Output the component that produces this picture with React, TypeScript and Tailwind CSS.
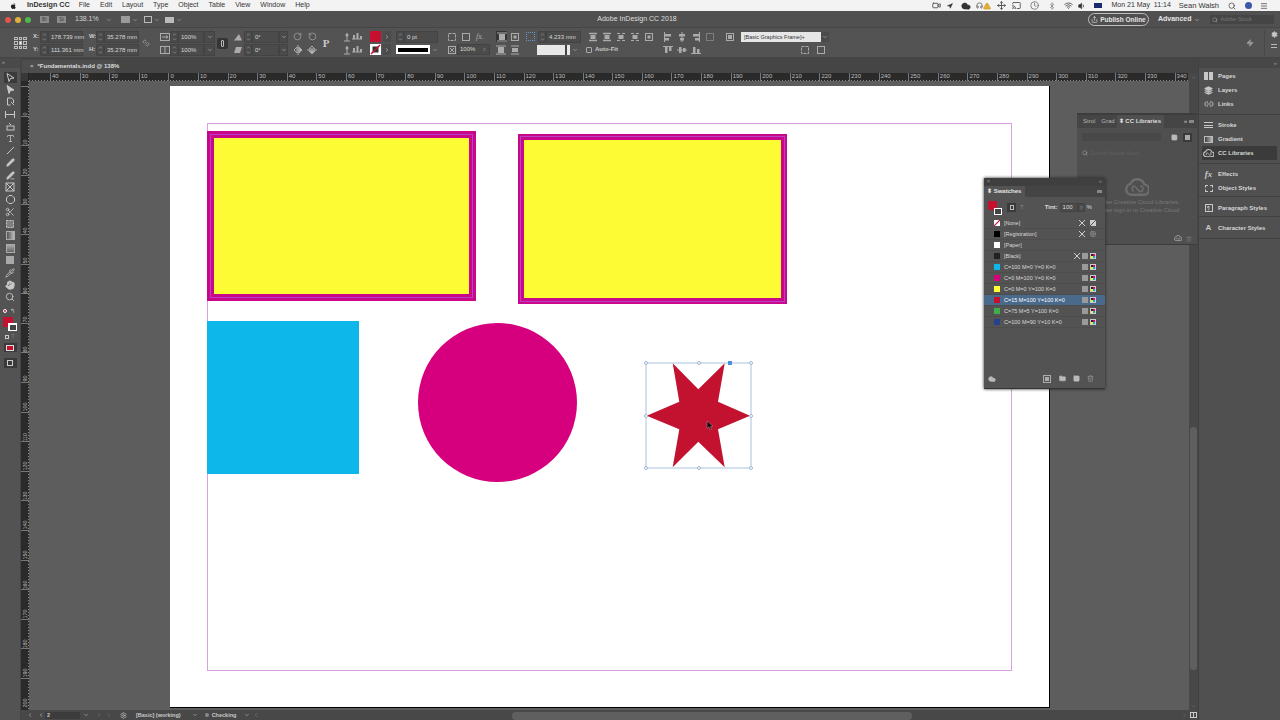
import React from "react";
import {
  ChevronDown, ChevronRight, ChevronUp, Search, Wifi, Volume1, Clock, Cloud, Navigation, Settings, Zap, Share, Layers, Link2, Trash2, Folder, Square, Hand, Pipette, Pencil, PenLine, Scissors, Type as TypeIcon, RotateCw, RotateCcw, AlertTriangle, Grid2x2, Menu, Cast, Video, Headphones, Move, Bluetooth,
} from "lucide-react";

const DIM = "#ababab";

function Stepper() {
  return (
    <div className="w-[8px] h-[12px] bg-[#4b4b4b] border border-[#434343] rounded-[1px] flex flex-col items-center justify-center shrink-0">
      <ChevronUp size={5} strokeWidth={2} className="text-[#c4c4c4]" />
      <ChevronDown size={5} strokeWidth={2} className="text-[#c4c4c4]" />
    </div>
  );
}

function Field({ label, value, w }: { label: string; value: string; w: number }) {
  return (
    <div className="flex items-center h-[12px]">
      <span className="text-[6px] w-[7px] text-[#d0d0d0] font-bold">{label}</span>
      <Stepper />
      <div className="h-[12px] bg-[#4b4b4b] border border-[#434343] text-[6px] leading-[10px] px-[2px] text-[#d8d8d8] whitespace-nowrap" style={{ width: w }}>
        {value}
      </div>
    </div>
  );
}

type GlyphKind = "box" | "frame" | "fit" | "fitV" | "wrap" | "wrap2" | "center" | "alignL" | "alignC" | "alignR" | "dist" | "alT" | "alM" | "alB" | "flipH" | "flipV" | "tree" | "bars" | "scaleW" | "scaleH" | "angle" | "shear" | "xbox" | "ctr" | "fill";

function G({ k }: { k: GlyphKind }) {
  const c = DIM;
  const p: Record<GlyphKind, React.ReactNode> = {
    box: <rect x="1.500" y="1.500" width="7" height="7" />,
    frame: <rect x="1.500" y="1.500" width="7" height="7" strokeDasharray="3 1" />,
    fit: <><rect x="1.500" y="1.500" width="7" height="7" /><rect x="3" y="3" width="4" height="4" fill={c} stroke="none" /></>,
    fitV: <><path d="M1 1.500h8M1 8.500h8" strokeWidth="1.500" /><rect x="2.500" y="3" width="5" height="4" fill={c} stroke="none" /></>,
    wrap: <><rect x="2" y="2" width="6" height="6" fill={c} stroke="none" /><path d="M0 1h10M0 9h10" /></>,
    wrap2: <><rect x="1.500" y="1.500" width="7" height="7" /><rect x="3.500" y="3.500" width="3" height="3" fill={c} stroke="none" /></>,
    center: <><rect x="2" y="3" width="6" height="4" fill={c} stroke="none" /><path d="M1 1h8M1 9h8" /></>,
    alignL: <><path d="M1.500 0v10" /><rect x="2" y="2" width="6" height="2.500" fill={c} stroke="none" /><rect x="2" y="6" width="4" height="2.500" fill={c} stroke="none" /></>,
    alignC: <><path d="M5 0v10" /><rect x="2" y="2" width="6" height="2.500" fill={c} stroke="none" /><rect x="3" y="6" width="4" height="2.500" fill={c} stroke="none" /></>,
    alignR: <><path d="M8.500 0v10" /><rect x="2" y="2" width="6" height="2.500" fill={c} stroke="none" /><rect x="4" y="6" width="4" height="2.500" fill={c} stroke="none" /></>,
    dist: <rect x="1.500" y="1.500" width="7" height="7" strokeDasharray="1 1" />,
    alT: <><path d="M0 1.500h10" /><rect x="2" y="2" width="2.500" height="6" fill={c} stroke="none" /><rect x="6" y="2" width="2.500" height="4" fill={c} stroke="none" /></>,
    alM: <><path d="M0 5h10" /><rect x="2" y="2" width="2.500" height="6" fill={c} stroke="none" /><rect x="6" y="3" width="2.500" height="4" fill={c} stroke="none" /></>,
    alB: <><path d="M0 8.500h10" /><rect x="2" y="2" width="2.500" height="6" fill={c} stroke="none" /><rect x="6" y="4" width="2.500" height="4" fill={c} stroke="none" /></>,
    flipH: <><path d="M5 0v10" /><path d="M4 2v6L1 5z" /><path d="M6 2v6l3-3z" fill={c} /></>,
    flipV: <><path d="M0 5h10" /><path d="M2 4h6L5 1z" /><path d="M2 6h6L5 9z" fill={c} /></>,
    tree: <><path d="M5 1v8M2 9h6" /><circle cx="5" cy="3" r="1.500" fill={c} stroke="none" /></>,
    bars: <><path d="M0 7h10" /><rect x="1" y="3" width="2" height="4" fill={c} stroke="none" /><rect x="4.500" y="1" width="2" height="6" fill={c} stroke="none" /><rect x="8" y="4" width="2" height="3" fill={c} stroke="none" /></>,
    scaleW: <><rect x=".5" y="1.500" width="9" height="7" /><path d="M2 5h6M6 3.500L8 5 6 6.500" /></>,
    scaleH: <><rect x=".5" y="1.500" width="9" height="7" /><path d="M5 8V2" /></>,
    angle: <><path d="M1 8.500h8L6 2z" fill={c} stroke="none" /></>,
    shear: <path d="M3 2h6L7 8H1z" fill={c} stroke="none" />,
    xbox: <><rect x="1.500" y="1.500" width="7" height="7" /><path d="M3 3l4 4M7 3l-4 4" /></>,
    ctr: <><path d="M1 1.500h3M6 1.500h3M1 8.500h3M6 8.500h3" /><rect x="2.500" y="3" width="5" height="4" fill={c} stroke="none" /></>,
    fill: <rect x="2" y="2" width="6" height="6" fill={c} stroke="none" />,
  };
  return (
    <svg width="10" height="10" viewBox="0 0 10 10" className="shrink-0" fill="none" stroke={c} strokeWidth="1">
      {p[k]}
    </svg>
  );
}

function PctField({ k }: { k: GlyphKind }) {
  return (
    <div className="flex items-center h-[12px]">
      <div className="w-[10px] flex justify-start"><G k={k} /></div>
      <Stepper />
      <div className="w-[26px] h-[12px] bg-[#4b4b4b] border border-[#434343] text-[6px] leading-[10px] px-[2px] text-[#d8d8d8]">100%</div>
      <div className="w-[11px] h-[12px] bg-[#4b4b4b] border border-[#434343] flex items-center justify-center">
        <ChevronDown size={6} className="text-[#c4c4c4]" />
      </div>
    </div>
  );
}

function AngleField({ k }: { k: GlyphKind }) {
  return (
    <div className="flex items-center h-[12px]">
      <div className="w-[11px] flex justify-start"><G k={k} /></div>
      <Stepper />
      <div className="w-[27px] h-[12px] bg-[#4b4b4b] border border-[#434343] text-[6px] leading-[10px] px-[2px] text-[#d8d8d8]">0°</div>
      <div className="w-[9px] h-[12px] bg-[#4b4b4b] border border-[#434343] flex items-center justify-center">
        <ChevronDown size={6} className="text-[#c4c4c4]" />
      </div>
    </div>
  );
}

function Col({ children, w, ml = 0 }: { children: React.ReactNode; w: number; ml?: number }) {
  return (
    <div className="flex flex-col gap-[1px] shrink-0" style={{ width: w, marginLeft: ml }}>
      {children}
    </div>
  );
}

function Row({ ks, className = "justify-between" }: { ks: GlyphKind[]; className?: string }) {
  return (
    <div className={`flex items-center h-[12px] ${className}`}>
      {ks.map((k, i) => <G key={i} k={k} />)}
    </div>
  );
}

function ControlPanel() {
  return (
    <div className="h-[30px] bg-[#535353] border-b border-[#454545] flex items-center pt-[1px] pl-[14px] shrink-0 relative">
      <div className="grid grid-cols-3 gap-[1px] w-[13px] shrink-0">
        {Array.from({ length: 9 }).map((_, i) => (
          <div key={i} className={`w-[3.6px] h-[3.6px] border border-[#bdbdbd] ${i === 4 ? "bg-white" : ""}`} />
        ))}
      </div>
      <Col w={50} ml={6}>
        <Field label="X:" value="178.739 mm" w={35} />
        <Field label="Y:" value="111.361 mm" w={35} />
      </Col>
      <Col w={50} ml={6}>
        <Field label="W:" value="35.278 mm" w={35} />
        <Field label="H:" value="35.278 mm" w={35} />
      </Col>
      <div className="w-[9px] ml-[2px] mr-[3px] shrink-0 flex justify-center"><Link2 size={8} className="text-[#a5a5a5] rotate-45" /></div>
      <Col w={55} ml={7}>
        <PctField k="scaleW" />
        <PctField k="scaleH" />
      </Col>
      <div className="w-[11px] h-[11px] ml-[2px] bg-[#353535] rounded-[2px] flex items-center justify-center shrink-0">
        <div className="w-[3px] h-[7px] border border-[#bbb] rounded-[1px]" />
      </div>
      <Col w={55} ml={5}>
        <AngleField k="angle" />
        <AngleField k="shear" />
      </Col>
      <Col w={24} ml={5}>
        <div className="flex items-center justify-between h-[12px]">
          <RotateCw size={9} className="text-[#a0a0a0]" />
          <RotateCcw size={9} className="text-[#a0a0a0]" />
        </div>
        <Row ks={["flipH", "flipV"]} />
      </Col>
      <div className="w-[12px] ml-[3px] shrink-0 text-[11px] leading-none font-['Liberation_Serif',serif] font-bold text-[#c8c8c8] text-center">P</div>
      <Col w={20} ml={10}>
        <Row ks={["tree", "bars"]} />
        <Row ks={["tree", "bars"]} />
      </Col>
      <Col w={22} ml={8}>
        <div className="flex items-center h-[12px]">
          <div className="w-[11px] h-[11px] bg-[#c5102f]" />
          <div className="w-[8px] h-[11px] ml-[2px] bg-[#4b4b4b] flex items-center justify-center"><ChevronRight size={6} className="text-[#ddd]" /></div>
        </div>
        <div className="flex items-center h-[12px]">
          <svg width="11" height="11"><rect width="11" height="11" fill="#fff" /><rect x="2.500" y="2.500" width="6" height="6" fill="#333" /><line x1="1" y1="10" x2="10" y2="1" stroke="#c5102f" strokeWidth="1.400" /></svg>
          <div className="w-[8px] h-[11px] ml-[2px] bg-[#4b4b4b] flex items-center justify-center"><ChevronRight size={6} className="text-[#ddd]" /></div>
        </div>
      </Col>
      <Col w={42} ml={4}>
        <div className="flex items-center h-[12px]">
          <Stepper />
          <div className="w-[34px] h-[12px] bg-[#4b4b4b] border border-[#434343] text-[6px] leading-[10px] px-[2px] text-[#d8d8d8]">0 pt</div>
        </div>
        <div className="flex items-center h-[12px]">
          <div className="w-[34px] h-[9px] bg-white flex items-center justify-center px-[2px]"><div className="w-full h-[4px] bg-black" /></div>
          <ChevronDown size={6} className="text-[#c4c4c4] ml-[2px]" />
        </div>
      </Col>
      <Col w={43} ml={9}>
        <div className="flex items-center h-[12px] gap-[4px]">
          <G k="frame" /><G k="box" />
          <span className="ml-[1px] font-['Liberation_Serif',serif] italic text-[8px] leading-none text-[#ababab]">fx.</span>
        </div>
        <div className="flex items-center h-[12px]">
          <G k="xbox" />
          <div className="w-[33px] h-[11px] bg-[#4b4b4b] border border-[#434343] text-[6px] leading-[9px] px-[2px] text-[#d8d8d8] flex justify-between items-center"><span>100%</span><ChevronRight size={5} /></div>
        </div>
      </Col>
      <Col w={24} ml={6}>
        <div className="flex items-center justify-between h-[12px]">
          <div className="w-[11px] h-[11px] bg-[#353535] flex items-center justify-center"><G k="wrap" /></div>
          <G k="wrap2" />
        </div>
        <Row ks={["wrap", "center"]} />
      </Col>
      <Col w={56} ml={6}>
        <div className="flex items-center h-[12px]">
          <div className="w-[9px] h-[9px] mr-[3px] border border-dotted border-[#5b9bd5] shrink-0" />
          <Stepper />
          <div className="w-[35px] h-[12px] bg-[#4b4b4b] border border-[#434343] text-[6px] leading-[10px] px-[2px] text-[#d8d8d8]">4.233 mm</div>
        </div>
        <div className="flex items-center h-[12px] pl-[11px]">
          <div className="w-[33px] h-[10px] bg-[#e8e8e8] flex justify-end pr-[3px] shrink-0"><div className="w-[2px] h-full bg-[#444]" /></div>
          <ChevronDown size={6} className="text-[#c4c4c4] ml-[2px]" />
        </div>
      </Col>
      <Col w={68} ml={4}>
        <div className="flex items-center justify-between h-[12px] pl-[2px]"><G k="fitV" /><G k="fitV" /><G k="ctr" /><G k="ctr" /><G k="wrap2" /></div>
        <div className="flex items-center h-[12px] gap-[3px]">
          <div className="w-[6px] h-[6px] border border-[#aaa] rounded-[1px]" />
          <span className="text-[6px] text-[#c8c8c8] font-bold">Auto-Fit</span>
        </div>
      </Col>
      <Col w={52} ml={9}>
        <Row ks={["alignL", "alignC", "alignR", "dist"]} />
        <div className="flex items-center gap-[4px] h-[12px]"><G k="alT" /><G k="alM" /><G k="alB" /></div>
      </Col>
      <div className="flex flex-col ml-[10px] gap-[1px] w-[104px] shrink-0">
        <div className="flex items-center h-[12px]">
          <G k="fit" />
          <div className="w-[81px] h-[10px] ml-[6px] bg-[#e6e6e6] text-[5.5px] leading-[10px] px-[3px] text-[#333] whitespace-nowrap">[Basic Graphics Frame]+</div>
          <div className="w-[8px] h-[10px] bg-[#4b4b4b] flex items-center justify-center"><ChevronDown size={6} className="text-[#c4c4c4]" /></div>
        </div>
        <div className="flex items-center justify-end h-[12px] gap-[6px] pr-[3px]"><G k="frame" /><G k="box" /></div>
      </div>
      <div className="ml-auto flex items-center">
        <Zap size={8} className="text-[#9a9a9a] mr-[10px]" fill="#9a9a9a" />
        <div className="flex flex-col items-center gap-[6px] border-l border-[#484848] pl-[3px] w-[16px] h-[26px] py-[1px]">
          <Settings size={7} className="text-[#c8c8c8]" fill="#c8c8c8" />
          <div className="w-[6px] h-[4px] border-y border-[#bbb]" />
        </div>
      </div>
    </div>
  );
}

function MenuBar() {
  const items = ["File", "Edit", "Layout", "Type", "Object", "Table", "View", "Window", "Help"];
  const cls = "text-[#333] shrink-0";
  return (
    <div className="h-[11px] bg-[#f3f3f3] flex items-center text-[7px] text-[#333] shrink-0 pl-[10px] font-['Liberation_Sans',sans-serif]">
      <svg width="7" height="8" viewBox="0 0 24 24" fill="#222" className="mr-[10px] shrink-0">
        <path d="M17 12.500c0-2.600 2.100-3.800 2.200-3.900-1.200-1.800-3.100-2-3.700-2-1.600-.2-3.100.9-3.900.9-.8 0-2-.9-3.300-.9-1.700 0-3.300 1-4.200 2.500-1.800 3.100-.5 7.700 1.300 10.200.9 1.200 1.900 2.600 3.200 2.600 1.300-.1 1.800-.8 3.300-.8 1.600 0 2 .8 3.300.8 1.400 0 2.300-1.200 3.100-2.500 1-1.400 1.400-2.800 1.400-2.900-.1 0-2.700-1-2.700-4zM14.500 4.900c.7-.9 1.200-2 1.100-3.200-1 0-2.300.7-3 1.500-.6.700-1.200 1.900-1.100 3.100 1.200.1 2.300-.6 3-1.400z" />
      </svg>
      <span className="font-bold text-[7.2px] mr-[9px]">InDesign CC</span>
      <div className="flex gap-[10px]">
        {items.map((m) => <span key={m}>{m}</span>)}
      </div>
      <div className="ml-auto flex items-center pr-[12px]">
        <Video size={9} className={`${cls} mr-[6px]`} />
        <Navigation size={6} fill="#333" className={`${cls} mr-[8px]`} />
        <Cloud size={10} fill="#333" className={`${cls} mr-[5px]`} />
        <Headphones size={7} className={cls} />
        <AlertTriangle size={8} fill="#e9b23a" className="text-[#c8941e] mr-[6px] shrink-0" />
        <Move size={9} className={`${cls} mr-[6px]`} />
        <Cast size={9} className={`${cls} mr-[9px]`} />
        <Clock size={9} className="mr-[9px] text-[#666] shrink-0" />
        <Bluetooth size={8} className="mr-[8px] text-[#777] shrink-0" />
        <Wifi size={9} className={`${cls} mr-[5px]`} />
        <Volume1 size={8} fill="#333" className={`${cls} mr-[8px]`} />
        <div className="w-[8px] h-[5px] bg-[#1a2a6c] mr-[9px] shrink-0" />
        <span className="mr-[8px] whitespace-nowrap">Mon 21 May&nbsp; 11:14</span>
        <span className="mr-[9px] whitespace-nowrap text-[7.5px]">Sean Walsh</span>
        <Search size={8} className={`${cls} mr-[9px]`} />
        <div className="w-[7px] h-[7px] rounded-full bg-[#3a57a8] mr-[8px] shrink-0" />
        <Menu size={8} className={cls} />
      </div>
    </div>
  );
}

function AppBar() {
  return (
    <div className="h-[17px] bg-[#505050] border-b border-[#464646] flex items-center pt-[1px] text-[7px] shrink-0">
      <div className="w-[190px] flex items-center pl-[5px] shrink-0">
        <div className="w-[6px] h-[6px] rounded-full bg-[#e2544d]" />
        <div className="w-[6px] h-[6px] rounded-full bg-[#e0b13a] ml-[4px]" />
        <div className="w-[6px] h-[6px] rounded-full bg-[#4fb84a] ml-[4px]" />
        <div className="w-[9px] h-[7px] ml-[9px] bg-[#8a8a8a] text-[5px] leading-[7px] text-center text-[#444]">Br</div>
        <div className="w-[9px] h-[7px] ml-[8px] bg-[#8a8a8a] text-[5px] leading-[7px] text-center text-[#444]">St</div>
        <span className="ml-[9px] text-[#d0d0d0]">138.1%</span>
        <ChevronDown size={6} className="ml-[7px] text-[#bbb]" />
        <div className="w-[9px] h-[7px] ml-[9px] bg-[#9a9a9a]" />
        <ChevronDown size={6} className="ml-[2px] text-[#bbb]" />
        <div className="w-[8px] h-[7px] ml-[6px] border border-[#bbb]" />
        <ChevronDown size={6} className="ml-[2px] text-[#bbb]" />
        <div className="w-[9px] h-[6px] ml-[5px] bg-[#bbb]" />
        <ChevronDown size={6} className="ml-[2px] text-[#bbb]" />
      </div>
      <div className="flex-1 text-center text-[#dedede] text-[7px]">Adobe InDesign CC 2018</div>
      <div className="w-[196px] flex items-center pl-[4px] shrink-0">
        <div className="w-[61px] h-[13px] rounded-full border border-[#bdbdbd] flex items-center justify-center gap-[2px] text-[#e6e6e6] font-bold text-[6.5px] whitespace-nowrap">
          <Share size={7} /><span>Publish Online</span>
        </div>
        <span className="ml-[9px] text-[#e6e6e6] font-bold">Advanced</span>
        <ChevronDown size={6} className="ml-[3px] text-[#ccc]" />
        <div className="w-[64px] h-[9px] ml-[10px] bg-[#454545] flex items-center pl-[2px] gap-[2px] text-[5.5px] text-[#777]">
          <Search size={6} className="text-[#aaa]" /><span>Adobe Stock</span>
        </div>
      </div>
    </div>
  );
}

function Toolbar() {
  const simple = (c: React.ReactNode, k: string, active = false) => (
    <div key={k} className={`w-[13px] h-[11px] flex items-center justify-center ${active ? "bg-[#3a3a3a]" : ""}`}>{c}</div>
  );
  const ic = "text-[#c8c8c8]";
  const poly = (pts: string, fill = "none") => (
    <svg width="9" height="9" viewBox="0 0 9 9" fill={fill} stroke="#c8c8c8"><polygon points={pts} /></svg>
  );
  return (
    <div className="w-[21px] bg-[#535353] border-r border-[#454545] flex flex-col items-center shrink-0">
      <div className="h-[10px] w-full bg-[#4a4a4a] text-[5px] leading-[9px] text-[#aaa] pl-[2px] shrink-0">»</div>
      <div className="flex flex-col items-center gap-[1.2px] mt-[4px]">
        {simple(poly("1,0.500 8,5 4.500,5.500 3,8.500"), "a", true)}
        {simple(poly("1,0.500 8,5 4.500,5.500 3,8.500", "#c8c8c8"), "b")}
        {simple(<svg width="9" height="9" fill="none" stroke="#c8c8c8"><path d="M1.500 1h4l2 2v3M1.500 1v7h3" /><path d="M5 5l3 3" /></svg>, "c")}
        {simple(<svg width="10" height="9" fill="none" stroke="#c8c8c8"><path d="M.5 1v7M9.500 1v7M1 4.500h8" /></svg>, "d")}
        {simple(<svg width="9" height="9" fill="none" stroke="#c8c8c8"><rect x="1" y="4" width="7" height="4" /><path d="M3 1l2 2" /></svg>, "e")}
        {simple(<TypeIcon size={9} className={ic} />, "f")}
        {simple(<svg width="9" height="9" stroke="#c8c8c8"><line x1="1" y1="8" x2="8" y2="1" /></svg>, "g")}
        {simple(<Pencil size={9} className={ic} fill="#c8c8c8" />, "h")}
        {simple(<PenLine size={9} className={ic} fill="#c8c8c8" />, "i")}
        {simple(<svg width="10" height="10" fill="none" stroke="#c8c8c8"><rect x="1" y="1" width="8" height="8" /><path d="M1 1l8 8M9 1l-8 8" /></svg>, "j")}
        {simple(poly("3,0.500 6,0.500 8.500,3 8.500,6 6,8.500 3,8.500 .5,6 .5,3"), "k")}
        {simple(<Scissors size={10} className={ic} />, "l")}
        {simple(<svg width="10" height="10" fill="#7f7f7f" stroke="#c8c8c8"><rect x="1.500" y="1.500" width="7" height="7" strokeDasharray="2 1" /></svg>, "m")}
        {simple(<div className="w-[9px] h-[9px] bg-gradient-to-r from-[#555] to-[#bdbdbd] border border-[#aaa]" />, "n")}
        {simple(<div className="w-[9px] h-[9px] bg-gradient-to-b from-[#aaa] to-[#666] border border-[#aaa]" />, "o")}
        {simple(<div className="w-[8px] h-[8px] bg-[#a8a8a8]" />, "p")}
        {simple(<Pipette size={10} className={ic} />, "q")}
        {simple(<Hand size={10} className={ic} fill="#c8c8c8" />, "r")}
        {simple(<Search size={10} className={ic} />, "s")}
      </div>
      <div className="flex items-center gap-[3px] mt-[6px] w-[14px]">
        <div className="w-[4px] h-[4px] bg-[#c5102f] rounded-full border border-white" />
        <div className="text-[6px] leading-none text-[#ccc]">↰</div>
      </div>
      <div className="relative w-[14px] h-[14px] mt-[3px]">
        <div className="w-[10px] h-[10px] bg-[#c5102f]" />
        <div className="absolute right-0 bottom-0 w-[9px] h-[8px] bg-white p-[1.500px]"><div className="w-full h-full bg-[#444]" /></div>
      </div>
      <div className="flex items-center gap-[2px] mt-[3px] w-[14px] justify-center">
        <div className="w-[4px] h-[4px] border border-[#ccc]" />
        <div className="text-[5px] leading-none text-[#888]">T</div>
      </div>
      <div className="w-[13px] h-[9px] mt-[4px] bg-[#3a3a3a] flex items-center justify-center"><div className="w-[8px] h-[6px] bg-[#c5102f] border border-[#ddd]" /></div>
      <div className="w-[13px] h-[10px] mt-[6px] bg-[#3a3a3a] flex items-center justify-center"><div className="w-[6px] h-[6px] border border-[#ccc]" /></div>
    </div>
  );
}

const TOP_LABELS = [40, 30, 20, 10, 0, 10, 20, 30, 40, 50, 60, 70, 80, 90, 100, 110, 120, 130, 140, 150, 160, 170, 180, 190, 200, 210, 220, 230, 240, 250, 260, 270, 280, 290, 300, 310, 320, 330, 340];

function TopRuler() {
  return (
    <div className="h-[8px] bg-[#2a2a2a] flex shrink-0 relative">
      <div className="w-[8px] h-full shrink-0 bg-[#383838] border-r border-[#222]" />
      <div className="flex pl-[21px] min-w-0 flex-1 overflow-hidden relative">
        {TOP_LABELS.map((n, i) => (
          <div key={i} className="w-[29.6px] shrink-0 border-l border-[#777] text-[6px] leading-[7px] pl-[1px] text-[#bdbdbd]">{n}</div>
        ))}
        <div className="absolute left-0 right-0 bottom-0 h-[1px] bg-[repeating-linear-gradient(90deg,#8a8a8a_0,#8a8a8a_1px,transparent_1px,transparent_3px)]" />
      </div>
      <div className="w-[10px] bg-[#484848] flex items-center justify-center shrink-0"><ChevronUp size={5} className="text-[#888]" /></div>
    </div>
  );
}

function LeftRuler() {
  const nums = [0, 10, 20, 30, 40, 50, 60, 70, 80, 90, 100, 110, 120, 130, 140, 150, 160, 170, 180, 190, 200];
  return (
    <div className="w-[8px] bg-[#2a2a2a] overflow-hidden shrink-0 relative pt-[5px]">
      {nums.map((n, i) => (
        <div key={i} className="h-[29.6px] border-t border-[#777] flex justify-center">
          <span className="text-[5.5px] text-[#bdbdbd] whitespace-nowrap leading-[7px] mt-[1px] [writing-mode:vertical-rl] rotate-180">{n}</span>
        </div>
      ))}
      <div className="absolute right-0 top-0 bottom-0 w-[1px] bg-[repeating-linear-gradient(180deg,#8a8a8a_0,#8a8a8a_1px,transparent_1px,transparent_3px)]" />
    </div>
  );
}

function Handle({ className }: { className: string }) {
  return <div className={`absolute w-[4px] h-[4px] bg-white border border-[#9db8d2] rounded-full ${className}`} />;
}

function StrokedRect({ x, y, w, h, bw }: { x: number; y: number; w: number; h: number; bw: number }) {
  return (
    <div className="absolute bg-[#fdfb33] border-[#c8078a]" style={{ left: x, top: y, width: w, height: h, borderWidth: bw }}>
      <div className="absolute -inset-[4px] border border-[#b93fc4] pointer-events-none" />
    </div>
  );
}

function Page() {
  // page origin is at screen (170,86); objects below are placed on the free canvas of the page
  return (
    <div className="absolute left-[141px] top-[5px] w-[880px] h-[622px] bg-white border-r border-b border-black">
      <div className="absolute left-[36.5px] top-[37px] w-[805px] h-[548px] border border-[#d9a3e2]" />
      <StrokedRect x={37} y={45} w={269} h={170} bw={7} />
      <StrokedRect x={348} y={48} w={269} h={170} bw={6} />
      <div className="absolute left-[37px] top-[235px] w-[152px] h-[153px] bg-[#0db7e9]" />
      <div className="absolute left-[248px] top-[237px] w-[159px] h-[159px] rounded-full bg-[#d6007f]" />
      <svg className="absolute left-[470px] top-[270px]" width="120" height="115" viewBox="640 356 120 115">
        <polygon points="672.700,363.300 698.300,389.300 724.700,363.300 718,401.700 750,415.700 718,429.300 724.700,467.300 698.300,441.700 672.700,467.300 679.300,429.300 646.700,415.700 679.300,401.700" fill="#c2122f" />
        <rect x="646" y="363" width="105" height="105" fill="none" stroke="#a9c3dc" strokeWidth="1" />
        <path d="M707 421l6 5-2.500.5 1 3-1.500.5-1-3-2 1.500z" fill="#111" stroke="#d08090" strokeWidth=".5" />
      </svg>
      <Handle className="left-[474px] top-[275px]" />
      <Handle className="left-[527px] top-[275px]" />
      <Handle className="left-[579px] top-[275px]" />
      <div className="absolute left-[558px] top-[275px] w-[4px] h-[4px] bg-[#4a90e0]" />
      <Handle className="left-[474px] top-[328px]" />
      <Handle className="left-[579px] top-[328px]" />
      <Handle className="left-[474px] top-[380px]" />
      <Handle className="left-[527px] top-[380px]" />
      <Handle className="left-[579px] top-[380px]" />
    </div>
  );
}

const SWATCHES: { name: string; c: string; kind: "none" | "reg" | "paper" | "black" | "std" }[] = [
  { name: "[None]", c: "#fff", kind: "none" },
  { name: "[Registration]", c: "#000", kind: "reg" },
  { name: "[Paper]", c: "#fff", kind: "paper" },
  { name: "[Black]", c: "#222", kind: "black" },
  { name: "C=100 M=0 Y=0 K=0", c: "#0db7e9", kind: "std" },
  { name: "C=0 M=100 Y=0 K=0", c: "#d6007f", kind: "std" },
  { name: "C=0 M=0 Y=100 K=0", c: "#ffff33", kind: "std" },
  { name: "C=15 M=100 Y=100 K=0", c: "#c2122f", kind: "std" },
  { name: "C=75 M=5 Y=100 K=0", c: "#3fae49", kind: "std" },
  { name: "C=100 M=90 Y=10 K=0", c: "#27408f", kind: "std" },
];

function Cmyk() {
  return (
    <div className="w-[6px] h-[6px] bg-[conic-gradient(#e6007e_0_25%,#00aeef_25%_50%,#fff200_50%_75%,#222_75%)] border border-[#ccc]" />
  );
}

function Cross() {
  return <svg width="6" height="6" stroke="#cfcfcf" strokeWidth="1"><path d="M0 0l6 6M6 0l-6 6" /></svg>;
}

function SwatchesPanel() {
  return (
    <div className="absolute left-[955px] top-[97px] w-[121px] h-[211px] bg-[#535353] flex flex-col shadow-[0_0_3px_#222] border-b border-[#333] z-20">
      <div className="h-[8px] bg-[#3f3f3f] flex items-center justify-between px-[3px] text-[5px] text-[#999] shrink-0">
        <span>×</span><span>‹‹</span>
      </div>
      <div className="h-[11px] bg-[#444] flex items-stretch shrink-0">
        <div className="w-[41px] bg-[#535353] text-[6px] font-bold text-[#e4e4e4] leading-[11px] pl-[3px] whitespace-nowrap">⬍ Swatches</div>
        <div className="ml-auto mr-[3px] mt-[4px] w-[5px] h-[3px] bg-[#888]" />
      </div>
      <div className="h-[21px] flex items-center shrink-0">
        <div className="relative w-[14px] h-[14px] ml-[4px] shrink-0">
          <div className="w-[9px] h-[9px] bg-[#c5102f]" />
          <div className="absolute right-0 bottom-0 w-[8px] h-[7px] bg-white p-[1px]"><div className="w-full h-full bg-[#444]" /></div>
        </div>
        <div className="w-[9px] h-[9px] ml-[5px] bg-[#3a3a3a] flex items-center justify-center shrink-0"><div className="w-[4px] h-[5px] border border-[#bbb]" /></div>
        <div className="text-[6px] ml-[4px] text-[#888]">T</div>
        <span className="text-[6px] text-[#ddd] ml-[21px] font-bold">Tint:</span>
        <div className="w-[18px] h-[9px] ml-[2px] bg-[#4b4b4b] border border-[#434343] text-[6px] leading-[7px] px-[2px] text-[#ddd]">100</div>
        <div className="w-[7px] h-[9px] bg-[#4b4b4b] border border-[#434343] flex items-center justify-center"><ChevronRight size={5} className="text-[#ddd]" /></div>
        <span className="text-[6px] text-[#ddd] ml-[2px]">%</span>
      </div>
      <div className="flex flex-col shrink-0">
        {SWATCHES.map((s) => {
          const selected = s.name.startsWith("C=15");
          return (
            <div key={s.name} className={`h-[11px] flex items-center pl-[10px] border-b border-[#4d4d4d] ${selected ? "bg-[#4a6a8c]" : ""}`}>
              {s.kind === "none" ? (
                <svg width="6" height="6"><rect width="6" height="6" fill="#fff" /><line x1="0" y1="6" x2="6" y2="0" stroke="#c5102f" strokeWidth="1.200" /></svg>
              ) : (
                <div className="w-[6px] h-[6px]" style={{ backgroundColor: s.c }} />
              )}
              <span className={`ml-[4px] text-[5.5px] whitespace-nowrap ${selected ? "text-white" : "text-[#d8d8d8]"}`}>{s.name}</span>
              <div className="ml-auto flex items-center pr-[9px] gap-[2px]">
                {(s.kind === "none" || s.kind === "reg" || s.kind === "black") && <Cross />}
                {s.kind === "black" || s.kind === "std" ? <div className="w-[6px] h-[6px] bg-[#9a9a9a]" /> : null}
                {s.kind === "none" && <svg width="6" height="6" className="ml-[3px]"><rect width="6" height="6" fill="#ccc" /><line x1="0" y1="6" x2="6" y2="0" stroke="#555" /></svg>}
                {s.kind === "reg" && <Grid2x2 size={6} className="ml-[3px] text-[#aaa]" />}
                {(s.kind === "black" || s.kind === "std") && <Cmyk />}
              </div>
            </div>
          );
        })}
      </div>
      <div className="mt-auto h-[11px] flex items-center pl-[4px] pr-[11px] mb-[4px] shrink-0">
        <Cloud size={8} fill="#bbb" className="text-[#bbb]" />
        <div className="ml-auto flex items-center gap-[7px]">
          <G k="fit" />
          <Folder size={7} fill="#bbb" className="text-[#bbb]" />
          <Square size={7} fill="#bbb" className="text-[#bbb]" />
          <Trash2 size={7} className="text-[#999]" />
        </div>
      </div>
    </div>
  );
}

function CCLogo({ size = 24, color = "#6d6d6d" }: { size?: number; color?: string }) {
  return (
    <svg width={size} height={size * 0.8} viewBox="0 0 30 24" fill="none" stroke={color} strokeWidth="3" className="shrink-0">
      <path d="M8 21a7 7 0 0 1-1-13.800A9 9 0 0 1 24 8a6.500 6.500 0 0 1-1 13z" />
      <path d="M11 17a4 4 0 0 1 0-7c3 0 5 7 8 7a3.500 3.500 0 0 0 0-7" strokeWidth="2" />
    </svg>
  );
}

function CCPanel() {
  return (
    <div className="absolute left-[1048px] top-[32px] w-[120px] h-[132px] bg-[#4f4f4f] flex flex-col z-10 border-b border-[#3c3c3c]">
      <div className="h-[2px] bg-[#3d3d3d] shrink-0" />
      <div className="h-[13px] bg-[#454545] flex items-stretch text-[6px] shrink-0">
        <span className="pl-[6px] leading-[13px] text-[#b5b5b5]">Strol</span>
        <span className="pl-[6px] leading-[13px] text-[#b5b5b5]">Grad</span>
        <div className="ml-[2px] w-[47px] bg-[#4f4f4f] text-[#dedede] font-bold leading-[13px] pl-[2px] whitespace-nowrap">⬍ CC Libraries</div>
        <span className="ml-auto leading-[13px] text-[#ccc]">»</span>
        <span className="ml-[2px] mr-[3px] mt-[5px] w-[5px] h-[3px] bg-[#888]" />
      </div>
      <div className="flex items-center h-[14px] mt-[2px] px-[5px] shrink-0">
        <div className="w-[82px] h-[8px] bg-[#484848]" />
        <Grid2x2 size={7} className="ml-[10px] text-[#bbb]" fill="#bbb" />
        <div className="w-[9px] h-[9px] ml-[5px] bg-[#3a3a3a] flex items-center justify-center"><div className="w-[5px] h-[5px] bg-[#aaa]" /></div>
      </div>
      <div className="h-[12px] mt-[3px] flex items-center px-[5px] text-[5.5px] text-[#5f5f5f] gap-[2px] shrink-0">
        <Search size={6} className="text-[#aaa]" /><span>Search Adobe Stock</span>
      </div>
      <div className="flex flex-col items-center mt-[19px] text-[6px] leading-[8px] text-[#777] shrink-0">
        <CCLogo />
        <span className="mt-[1px] whitespace-nowrap">To use Creative Cloud Libraries,</span>
        <span className="whitespace-nowrap">please sign in to Creative Cloud</span>
      </div>
      <div className="mt-auto h-[11px] flex items-center justify-end gap-[4px] pr-[5px] shrink-0">
        <CCLogo size={8} color="#aaa" />
        <Trash2 size={6} className="text-[#777]" />
      </div>
    </div>
  );
}

function DockItem({ icon, label, active = false }: { icon: React.ReactNode; label: string; active?: boolean }) {
  return (
    <div className={`h-[14px] mx-[3px] flex items-center gap-[3px] text-[6px] font-bold text-[#d6d6d6] whitespace-nowrap ${active ? "bg-[#3b3b3b]" : ""}`}>
      <span className="w-[13px] flex justify-center shrink-0">{icon}</span>
      <span>{label}</span>
    </div>
  );
}

function DockGroup({ children, cls }: { children: React.ReactNode; cls: string }) {
  return (
    <div className={`border-b border-[#414141] flex flex-col ${cls}`}>
      {children}
    </div>
  );
}

function Dock() {
  const ic = "text-[#c8c8c8]";
  return (
    <div className="w-[82px] bg-[#505050] border-l border-[#404040] flex flex-col shrink-0">
      <div className="h-[10px] bg-[#474747] text-[5px] leading-[10px] text-right pr-[3px] text-[#aaa] shrink-0">‹‹</div>
      <DockGroup cls="pt-[1px] pb-[3px]">
        <DockItem icon={<div className="flex gap-[1px]"><div className="w-[4px] h-[8px] bg-[#c8c8c8]" /><div className="w-[4px] h-[8px] bg-[#c8c8c8]" /></div>} label="Pages" />
        <DockItem icon={<Layers size={9} className={ic} fill="#c8c8c8" />} label="Layers" />
        <DockItem icon={<Link2 size={10} className={ic} />} label="Links" />
      </DockGroup>
      <DockGroup cls="pt-[3px] pb-[3px]">
        <DockItem icon={<div className="w-[9px] h-[6px] border-y border-[#c8c8c8] flex items-center"><div className="w-full h-[1px] bg-[#c8c8c8]" /></div>} label="Stroke" />
        <DockItem icon={<div className="w-[9px] h-[7px] border border-[#bbb] bg-gradient-to-r from-[#444] to-[#bbb]" />} label="Gradient" />
        <DockItem icon={<CCLogo size={11} color="#c8c8c8" />} label="CC Libraries" active />
      </DockGroup>
      <DockGroup cls="pt-[3px] pb-[1px]">
        <DockItem icon={<span className="font-['Liberation_Serif',serif] italic text-[9px] leading-none text-[#c8c8c8]">fx</span>} label="Effects" />
        <DockItem icon={<div className="w-[8px] h-[7px] border border-dashed border-[#c8c8c8]" />} label="Object Styles" />
      </DockGroup>
      <DockGroup cls="pt-[4px] pb-[1px]">
        <DockItem icon={<div className="w-[8px] h-[8px] border border-[#c8c8c8] text-[5px] leading-[6px] text-center text-[#c8c8c8]">¶</div>} label="Paragraph Styles" />
      </DockGroup>
      <DockGroup cls="pt-[4px] pb-[3px]">
        <DockItem icon={<span className="text-[8px] leading-none text-[#c8c8c8]">A</span>} label="Character Styles" />
      </DockGroup>
    </div>
  );
}

function StatusBar() {
  return (
    <div className="h-[10px] bg-[#484848] flex items-center shrink-0 text-[5.5px] text-[#c8c8c8]">
      <div className="w-[491px] flex items-center pl-[6px] shrink-0">
        <ChevronRight size={6} className="rotate-180" />
        <ChevronRight size={6} className="rotate-180 ml-[5px]" />
        <div className="w-[35px] h-[7px] ml-[1px] bg-[#3c3c3c] text-[5.500px] leading-[7px] pl-[2px] font-bold">2</div>
        <ChevronDown size={6} className="ml-[3px]" />
        <ChevronRight size={6} className="ml-[7px] text-[#777]" />
        <ChevronRight size={6} className="ml-[4px] text-[#777]" />
        <Settings size={7} className="ml-[8px]" />
        <span className="ml-[9px] font-bold whitespace-nowrap">[Basic] (working)</span>
        <ChevronDown size={6} className="ml-[11px]" />
        <div className="w-[4px] h-[4px] rounded-full bg-[#888] ml-[7px]" />
        <span className="ml-[3px] font-bold">Checking</span>
        <ChevronDown size={6} className="ml-[8px]" />
        <ChevronRight size={6} className="rotate-180 ml-[3px] text-[#888]" />
      </div>
      <div className="w-[400px] h-[8px] bg-[#5f5f5f] rounded-full shrink-0 mt-[1px]" />
      <div className="ml-auto flex items-center pr-[1px]">
        <ChevronRight size={5} className="text-[#888]" />
        <div className="w-[7px] h-[6px] ml-[3px] border border-[#ccc] flex justify-center"><div className="w-[1px] h-full bg-[#ccc]" /></div>
      </div>
    </div>
  );
}

export default function App() {
  return (
    <div className="w-[1280px] h-[720px] overflow-hidden flex flex-col bg-[#535353] font-['Liberation_Sans',sans-serif]">
      <MenuBar />
      <AppBar />
      <ControlPanel />
      <div className="flex-1 flex min-h-0">
        <Toolbar />
        <div className="flex-1 flex flex-col min-w-0">
          <div className="h-[15px] bg-[#454545] flex items-end shrink-0">
            <div className="w-[93px] ml-[1px] h-[13px] bg-[#4d4d4d] flex items-center pl-[8px] text-[6px] font-bold text-[#dcdcdc] whitespace-nowrap">
              <span className="mr-[4px] text-[#bbb]">×</span>*Fundamentals.indd @ 138%
            </div>
          </div>
          <TopRuler />
          <div className="flex-1 flex min-h-0">
            <LeftRuler />
            <div className="flex-1 relative bg-[#5d5d5d] min-w-0">
              <Page />
              <CCPanel />
              <SwatchesPanel />
            </div>
            <div className="w-[9px] bg-[#484848] flex flex-col items-center pt-[346px] shrink-0">
              <div className="w-[7px] h-[243px] rounded-full bg-[#5f5f5f]" />
              <ChevronDown size={5} className="mt-[34px] text-[#888]" />
            </div>
          </div>
          <StatusBar />
        </div>
        <Dock />
      </div>
    </div>
  );
}
